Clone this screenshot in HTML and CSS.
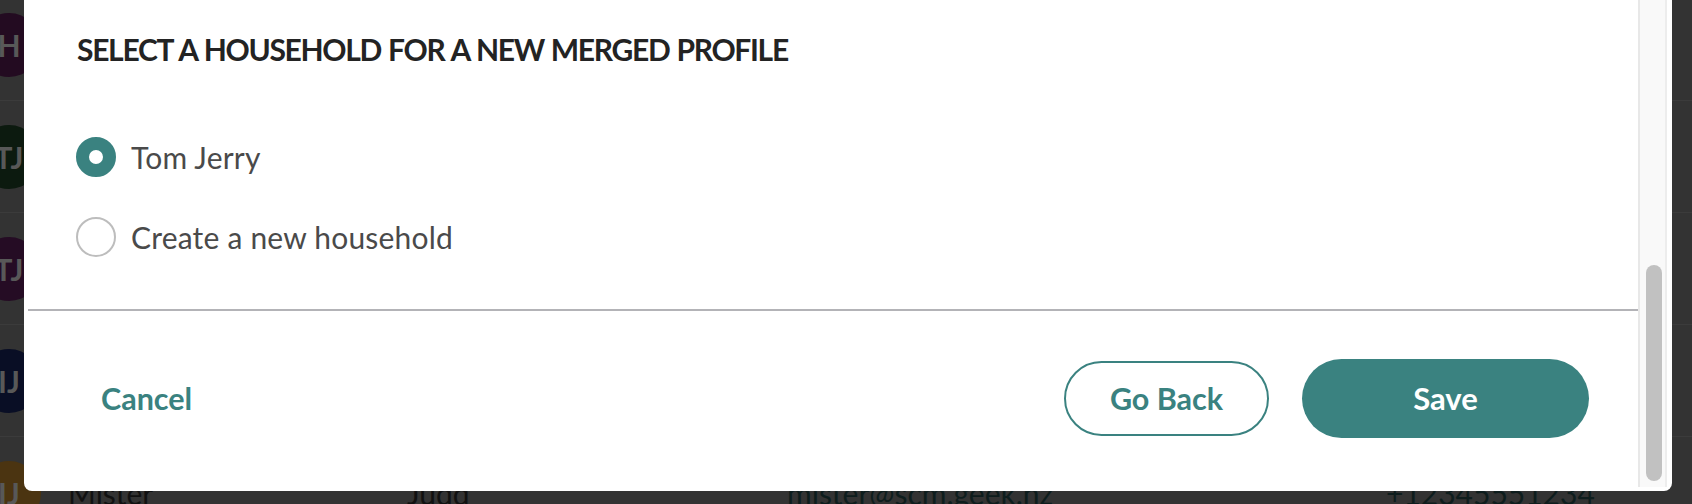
FILE: index.html
```html
<!DOCTYPE html>
<html lang="en">
<head>
<meta charset="utf-8">
<title>Merge profiles</title>
<link rel="stylesheet" href="styles.css">
</head>
<body>
  <div class="page">
    <div class="rows">
      <div class="row"><span class="avatar av-purple">H</span><span class="cell"></span></div>
      <div class="row"><span class="avatar av-green">TJ</span><span class="cell"></span></div>
      <div class="row"><span class="avatar av-plum">TJ</span><span class="cell"></span></div>
      <div class="row"><span class="avatar av-navy">IJ</span><span class="cell"></span></div>
      <div class="row">
        <span class="avatar av-orange">IJ</span>
        <span class="cell">Mister</span>
        <span class="cell">Judd</span>
        <span class="cell link">mister@scm.geek.nz</span>
        <span class="cell link">+12345551234</span>
      </div>
    </div>
  </div>

  <div class="modal">
    <div class="modal-inner">
      <div class="scroll">
        <h2 class="title">SELECT A HOUSEHOLD FOR A NEW MERGED PROFILE</h2>
        <div class="options">
          <label class="option">
            <span class="radio checked"></span>
            <span class="option-label">Tom Jerry</span>
          </label>
          <label class="option">
            <span class="radio"></span>
            <span class="option-label">Create a new household</span>
          </label>
        </div>
        <hr class="divider">
        <div class="footer">
          <button class="btn btn-text">Cancel</button>
          <div class="actions">
            <button class="btn btn-outline">Go Back</button>
            <button class="btn btn-primary">Save</button>
          </div>
        </div>
      </div>
      <div class="scrollbar"><div class="thumb"></div></div>
    </div>
  </div>
</body>
</html>
```

FILE: styles.css
```css
* { box-sizing: border-box; }

html, body {
  margin: 0;
  padding: 0;
  width: 1692px;
  height: 504px;
  overflow: hidden;
}

body {
  background: #333333;
  font-family: "Lato", "Noto Sans", sans-serif;
  position: relative;
}

/* dimmed page underneath */
.page {
  width: 100%;
  height: 100%;
}

.rows {
  margin-top: -11px;
}

.row {
  height: 112px;
  border-bottom: 1px solid #3b3b3b;
  display: grid;
  grid-template-columns: 68px 339px 380px 599px auto;
  align-items: center;
}

.avatar {
  width: 64px;
  height: 64px;
  border-radius: 50%;
  margin-left: -23px;
  display: flex;
  align-items: center;
  justify-content: center;
  font-weight: 700;
  font-size: 30px;
  color: #585858;
}

.av-purple { background: #230b21; }
.av-green { background: #0c1a0f; }
.av-plum { background: #250c24; }
.av-navy { background: #090e25; }
.av-orange { background: #4b3411; }

.cell {
  font-size: 30px;
  color: #111111;
  line-height: 1.2;
  padding-top: 1px;
}

.cell.link { color: #0e1d1d; }

/* modal */
.modal {
  position: absolute;
  left: 24px;
  width: 1648px;
  top: -8px;
  bottom: 13px;
  background: #ffffff;
  border-radius: 8px;
  padding: 0 5px 4px 4px;
}

.modal-inner {
  display: flex;
  height: 100%;
}

.scroll {
  flex: 1;
  display: flex;
  flex-direction: column;
  padding-top: 39px;
}

.title {
  margin: 0 49px;
  font-size: 30px;
  line-height: 1.22;
  font-weight: 700;
  color: #232323;
  letter-spacing: -1.3px;
  word-spacing: 1px;
}

.options {
  margin: 69px 48px 0;
  display: flex;
  flex-direction: column;
  gap: 40px;
}

.option {
  display: flex;
  align-items: center;
  gap: 15px;
  height: 40px;
}

.radio {
  width: 40px;
  height: 40px;
  border-radius: 50%;
  border: 2px solid #bdbdbd;
  background: #ffffff;
  flex: none;
}

.radio.checked {
  border: 13px solid #3a8280;
}

.option-label {
  font-size: 30px;
  line-height: 1.2;
  color: #4a4a4a;
  letter-spacing: 0.2px;
}

.divider {
  margin: 52px 0 0;
  border: 0;
  height: 2px;
  background: #b3b3b7;
}

.footer {
  height: 176px;
  display: flex;
  align-items: center;
  justify-content: space-between;
  padding: 0 49px;
}

.actions {
  display: flex;
  align-items: center;
  gap: 33px;
}

.btn {
  font-family: "Lato", "Noto Sans", sans-serif;
  font-weight: 700;
  font-size: 30.5px;
  line-height: 1.2;
  cursor: pointer;
  border-radius: 40px;
}

.btn-text {
  background: none;
  border: 0;
  color: #3a8280;
  padding: 0 24px;
  height: 60px;
}

.btn-outline {
  width: 205px;
  height: 75px;
  background: #ffffff;
  border: 2px solid #3a8280;
  color: #3a8280;
}

.btn-primary {
  width: 287px;
  height: 79px;
  background: #3a8280;
  border: 0;
  color: #ffffff;
  font-size: 31px;
}

/* scrollbar */
.scrollbar {
  width: 29px;
  flex: none;
  background: #f9f9f9;
  border-left: 2px solid #e8e8e8;
  border-right: 2px solid #ededed;
  display: flex;
  flex-direction: column;
  justify-content: flex-end;
  align-items: center;
  padding: 0 0 6px 2px;
}

.thumb {
  width: 16px;
  height: 216px;
  border-radius: 8px;
  background: #c1c1c1;
}
```
